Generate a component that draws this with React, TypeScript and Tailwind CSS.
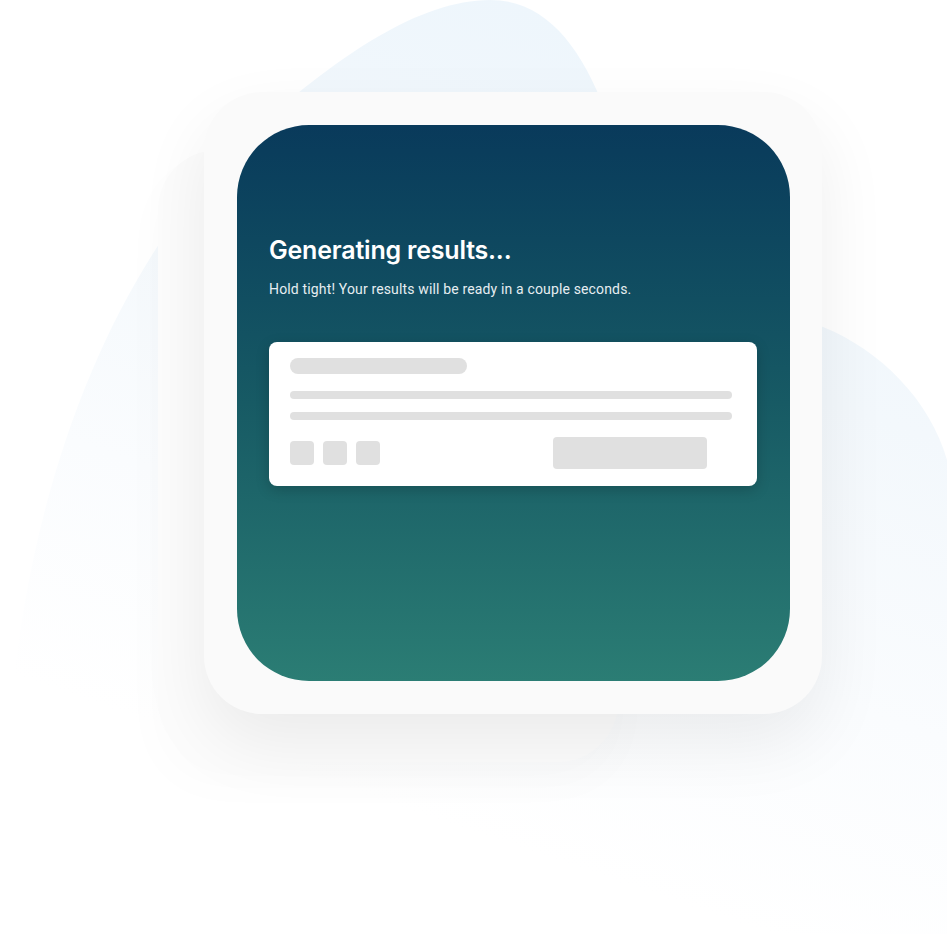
import React from "react";

function Blob() {
  return (
    <svg
      className="absolute left-0 top-0 pointer-events-none"
      width="947"
      height="934"
      viewBox="0 0 947 934"
      fill="none"
    >
      <defs>
        <linearGradient id="blobG" x1="520" y1="0" x2="260" y2="760" gradientUnits="userSpaceOnUse">
          <stop offset="0" stopColor="#eef6fc" />
          <stop offset="0.35" stopColor="#f3f8fc" />
          <stop offset="0.7" stopColor="#fafcfe" />
          <stop offset="1" stopColor="#ffffff" />
        </linearGradient>
      </defs>
      <path
        d="M0 934 L10 720 C30 470 120 250 260 125 C340 55 420 0 490 0 C545 0 580 45 605 110 L640 200 L700 260 L780 310 C800 318 812 322 823 327 C880 350 930 400 947 460 L947 934 Z"
        fill="url(#blobG)"
      />
    </svg>
  );
}

export default function App() {
  return (
    <div className="relative w-[947px] h-[934px] overflow-hidden bg-white" style={{ fontFamily: "Inter, 'Noto Sans', sans-serif" }}>
      <Blob />
      {/* back layer */}
      <div className="absolute left-[158px] top-[150px] w-[460px] h-[612px] rounded-[60px] bg-[#fcfcfc] shadow-[0_20px_50px_rgba(0,0,0,0.02)]" />
      <div className="relative pt-[92px] pl-[204px]">
        <div className="w-[618px] h-[622px] rounded-[58px] bg-[#fafafa] pt-[33px] pl-[33px] shadow-[0_30px_70px_rgba(0,0,0,0.07)]">
          <div className="w-[553px] h-[556px] rounded-[72px] bg-gradient-to-b from-[#093a5b] via-[#175a64] to-[#2b7d74] pt-[110px] pl-[32px]">
            <h1 className="text-[25px] leading-[30px] font-semibold text-white tracking-[-0.2px]">
              Generating results...
            </h1>
            <p
              className="mt-[14px] text-[14px] leading-[20px] text-[#e6edf1] tracking-[0.15px]"
              style={{ fontFamily: "Roboto, 'Noto Sans', sans-serif" }}
            >
              Hold tight! Your results will be ready in a couple seconds.
            </p>
            <div className="mt-[43px] w-[488px] h-[144px] rounded-[8px] bg-white pt-[16px] pl-[21px] pr-[25px] shadow-[0_4px_14px_rgba(0,0,0,0.18)]">
              <div className="w-[177px] h-[16px] rounded-full bg-[#e0e0e0]" />
              <div className="mt-[17px] h-[8px] rounded-full bg-[#e0e0e0]" />
              <div className="mt-[13px] h-[8px] rounded-full bg-[#e0e0e0]" />
              <div className="mt-[17px] flex items-center justify-between pr-[25px]">
                <div className="flex gap-[9px]">
                  <div className="w-[24px] h-[24px] rounded-[4px] bg-[#e0e0e0]" />
                  <div className="w-[24px] h-[24px] rounded-[4px] bg-[#e0e0e0]" />
                  <div className="w-[24px] h-[24px] rounded-[4px] bg-[#e0e0e0]" />
                </div>
                <div className="w-[154px] h-[32px] rounded-[4px] bg-[#e0e0e0]" />
              </div>
            </div>
          </div>
        </div>
      </div>
    </div>
  );
}
